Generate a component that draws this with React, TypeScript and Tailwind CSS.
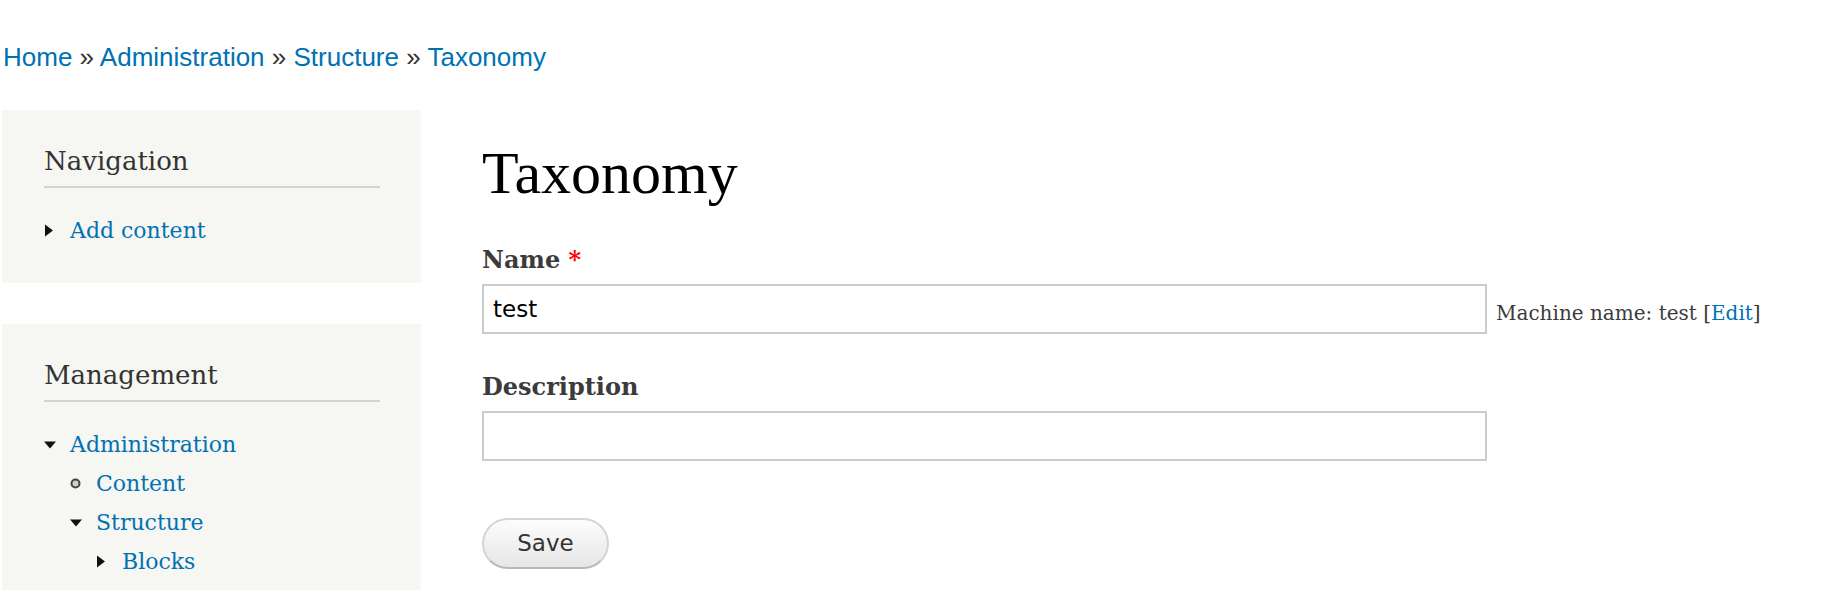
import React from "react"

const serif = "font-['DejaVu_Serif',Georgia,serif]"

function TriRight({ className = "" }: { className?: string }) {
  return (
    <svg width="10" height="13" viewBox="0 0 10 13" className={className}>
      <path d="M1 0.5 L9 6.5 L1 12.5 Z" fill="#111" />
    </svg>
  )
}

function TriDown() {
  return (
    <svg width="12" height="8" viewBox="0 0 12 8">
      <path d="M0 0.5 L12 0.5 L6 7.5 Z" fill="#111" />
    </svg>
  )
}

function Bullet() {
  return (
    <svg width="11" height="11" viewBox="0 0 11 11">
      <circle cx="5.5" cy="5.5" r="4" fill="#cfcfcf" stroke="#444" strokeWidth="2" />
    </svg>
  )
}

type Item = {
  label: string
  marker: "right" | "down" | "leaf"
  children?: Item[]
}

const management: Item[] = [
  {
    label: "Administration",
    marker: "down",
    children: [
      { label: "Content", marker: "leaf" },
      {
        label: "Structure",
        marker: "down",
        children: [{ label: "Blocks", marker: "right" }],
      },
    ],
  },
]

function MenuList({ items }: { items: Item[] }) {
  return (
    <ul>
      {items.map((it) => (
        <li key={it.label}>
          <div className="flex items-center h-[39px]">
            <span className="w-[26px] flex items-center">
              {it.marker === "right" && <TriRight />}
              {it.marker === "down" && <TriDown />}
              {it.marker === "leaf" && <Bullet />}
            </span>
            <a className="text-[#0071b3] text-[22px] leading-[39px]">{it.label}</a>
          </div>
          {it.children && (
            <div className="pl-[26px]">
              <MenuList items={it.children} />
            </div>
          )}
        </li>
      ))}
    </ul>
  )
}

function Block({ title, items, className = "" }: { title: string; items: Item[]; className?: string }) {
  return (
    <div className={`bg-[#f6f6f2] pt-[35px] pl-[42px] pr-[41px] ${className}`}>
      <h2 className="text-[26px] leading-[32px] text-[#333] pb-[9px] border-b-2 border-[#d3d3d3]">
        {title}
      </h2>
      <div className="mt-[23px]">
        <MenuList items={items} />
      </div>
    </div>
  )
}

export default function App() {
  return (
    <div className="w-[1834px] h-[590px] overflow-hidden bg-white">
      {/* breadcrumb */}
      <nav className="pt-[42px] pl-[3px] font-['Liberation_Sans',Arial,sans-serif] text-[26px] leading-[30px] text-[#333]">
        <a className="text-[#0071b3]">Home</a> » <a className="text-[#0071b3]">Administration</a> »{" "}
        <a className="text-[#0071b3]">Structure</a> » <a className="text-[#0071b3]">Taxonomy</a>
      </nav>

      <div className="flex mt-[38px]">
        <aside className={`w-[419px] ml-[2px] shrink-0 flex flex-col gap-[41px] ${serif}`}>
          <Block title="Navigation" items={[{ label: "Add content", marker: "right" }]} className="pb-[33px]" />
          <Block title="Management" items={management} className="pb-[60px]" />
        </aside>

        <main className="ml-[61px] pt-[30px]">
          <h1 className="font-['Liberation_Serif','Times_New_Roman',serif] text-[60px] leading-[66px] text-black">
            Taxonomy
          </h1>

          <form className={serif}>
            <label className="block mt-[39px] text-[24px] leading-[30px] font-bold text-[#3b3b3b]">
              Name <span className="text-[#ff0000]">*</span>
            </label>
            <div className="flex items-start mt-[9px]">
              <input
                readOnly
                value="test"
                className="w-[1005px] h-[50px] border-2 border-[#cccccc] bg-white px-[9px] font-['DejaVu_Sans',sans-serif] text-[23px] text-black outline-none"
              />
              <span className="ml-[9px] mt-[17px] text-[20px] leading-[24px] text-[#3b3b3b] whitespace-nowrap">
                Machine name: test [<a className="text-[#0071b3]">Edit</a>]
              </span>
            </div>

            <label className="block mt-[38px] text-[24px] leading-[30px] font-bold text-[#3b3b3b]">
              Description
            </label>
            <input
              readOnly
              value=""
              className="block mt-[9px] w-[1005px] h-[50px] border-2 border-[#cccccc] bg-white px-[9px] outline-none"
            />

            <button
              type="button"
              className="block mt-[57px] w-[127px] h-[51px] rounded-full border-2 border-[#d4d4d4] border-b-[#b8b8b8] bg-gradient-to-b from-[#fdfdfd] to-[#e6e6e6] font-['DejaVu_Sans',sans-serif] text-[23px] text-[#333]"
            >
              Save
            </button>
          </form>
        </main>
      </div>
    </div>
  )
}
